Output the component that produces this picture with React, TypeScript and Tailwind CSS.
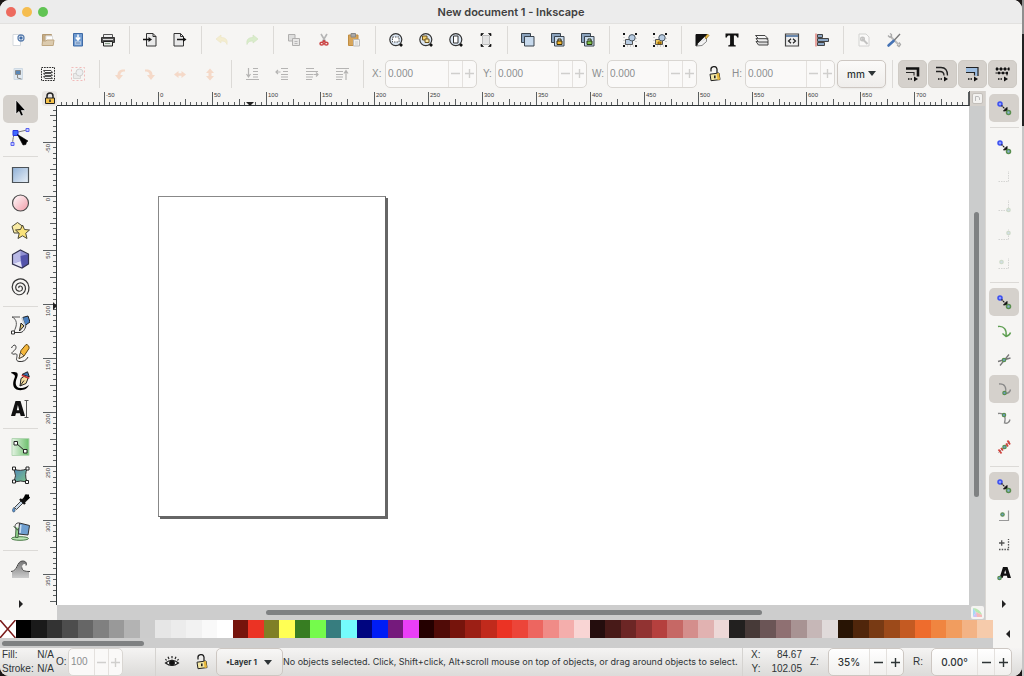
import React, { useEffect, useRef, useState } from "react";

type Kids = { children?: React.ReactNode };

const Ic = ({ s = 16, o = 1, children }: Kids & { s?: number; o?: number }) => (
  <svg width={s} height={s} viewBox={`0 0 ${s} ${s}`} opacity={o} fill="none" stroke="#222" strokeWidth="1" aria-hidden="true">
    {children}
  </svg>
);

const Sep = () => (
  <div className="flex h-7 w-3 shrink-0 justify-center">
    <div className="w-px bg-[#dcdad7]" />
  </div>
);

const Tool = ({ label, on, disabled, children }: Kids & { label: string; on?: boolean; disabled?: boolean }) => (
  <button
    aria-label={label}
    disabled={disabled}
    className={`flex h-7 w-[30px] shrink-0 items-center justify-center rounded-[5px] ${on ? "bg-[#d5d1cc]" : ""}`}
  >
    {children}
  </button>
);

const Minus = () => (
  <svg width="9" height="9" stroke="currentColor" strokeWidth="1.4" aria-hidden="true"><path d="M0 4.5H9" /></svg>
);
const Plus = () => (
  <svg width="9" height="9" stroke="currentColor" strokeWidth="1.4" aria-hidden="true"><path d="M0 4.5H9M4.5 0V9" /></svg>
);

const Caret = () => (
  <svg width="8" height="5" className="pointer-events-none" aria-hidden="true"><path d="M0 0H8L4 5Z" fill="#2e3436" /></svg>
);

const Spin = ({ id, value, width, off, wide }: { id: string; value: string; width: string; off?: boolean; wide?: boolean }) => (
  <div
    className={`flex h-7 shrink-0 overflow-hidden rounded-[5px] border ${width} ${
      off ? "border-[#d9d6d2] bg-[#faf9f8] text-[#8b8e8f]" : "border-[#cdc7c2] bg-linear-to-b from-white to-[#f1f0ee] text-[#2e3436]"
    }`}
  >
    <input
      id={id}
      defaultValue={value}
      disabled={off}
      className={`w-0 min-w-0 flex-1 bg-transparent outline-none ${wide ? "text-center font-[Inter] font-medium" : "pl-0.5"}`}
    />
    <button aria-label={`Decrease ${id}`} className={`flex items-center justify-center border-l border-[#e4e1de] ${wide ? "w-[17px]" : "w-[14px]"} ${off ? "text-[#d0cfcd]" : ""}`}>
      <Minus />
    </button>
    <button aria-label={`Increase ${id}`} className={`flex items-center justify-center border-l border-[#e4e1de] ${wide ? "w-[17px]" : "w-[14px]"} ${off ? "text-[#d0cfcd]" : ""}`}>
      <Plus />
    </button>
  </div>
);

const OpenLock = () => (
  <Ic>
    <path d="M4 5.5V4a3 3 0 0 1 6-.8V7" stroke="#222" strokeWidth="1.3" />
    <path d="M3 8.2 12 7l1 6.600L4 14.700Z" fill="#f3e7a4" />
    <path d="M9.600 7.500 12 7l1 6.600-2.400.4Z" fill="#e8b93c" stroke="none" />
    <path d="M7.800 9.600v2.600" strokeWidth="1.600" />
  </Ic>
);

const Lens = ({ children }: Kids) => (
  <Ic>
    <path d="M11.500 11.500 14 14" strokeWidth="2.600" stroke="#111" />
    <circle cx="7.800" cy="7.600" r="6" fill="#dbe6f2" stroke="#333" strokeWidth="1.200" />
    {children}
  </Ic>
);

const Stack = ({ children }: Kids) => (
  <Ic>
    <path d="M1.500 1.500h9v9h-9z" fill="#8ba3bd" stroke="#39434d" />
    <path d="M4.500 4.500h9.500v9.500h-9.500z" fill="#c7d9ec" stroke="#39434d" />
    {children}
  </Ic>
);

const Corners = ({ lock }: { lock?: boolean }) => (
  <Ic>
    <path d="M3.500 7.500h7v5h-7z" fill={lock ? "#f2c95c" : "#b8cce2"} stroke="#555" />
    <circle cx="10" cy="5.800" r="3.200" fill="#b8cce2" stroke="#4a5661" />
    {lock && <path d="M6 10h3v2H6z" fill="#f7a800" stroke="#5a3c00" strokeWidth=".7" />}
    <path d="M1 1h2v2H1zM13 1h2v2h-2zM1 13h2v2H1zM13 13h2v2h-2z" fill="#111" stroke="none" />
    <path d="M2 5v7M5 14h7M14 6v6" stroke="#aaa" strokeDasharray="1 2" />
  </Ic>
);

const topGroups: { n: string; off?: boolean; i: React.ReactNode }[][] = [
  [
    { n: "New", i: <Ic><path d="M3 2.500h7.500v11H3z" fill="#fff" stroke="#d5d9dd" /><circle cx="11" cy="6" r="3" fill="#fff" stroke="#5c7fae" strokeWidth="1.300" /><path d="M9.300 6h3.400M11 4.300v3.400" stroke="#2f5f9f" strokeWidth="1.300" /></Ic> },
    { n: "Open", i: <Ic><path d="M2.500 2.500h9v9h-9z" fill="#c4ab85" stroke="#b49a73" /><path d="M6 4h6.500v5H6z" fill="#fff" stroke="#ddd" /><path d="M2.500 9H6l1-1h7l-.8 5.500H2Z" fill="#dccbae" stroke="#bfa781" /></Ic> },
    { n: "Save", i: <Ic><path d="M3.500 1.500h9v12.500h-9z" fill="#6f9bd1" stroke="#3f6aa5" /><path d="M5 9.500h6v3H5z" fill="#d6e1ef" stroke="none" /><path d="M8 2.500v5M5.800 5.500 8 8l2.200-2.500" stroke="#fff" strokeWidth="1.500" /><path d="M5.500 11h5" stroke="#3f6aa5" /></Ic> },
    { n: "Print", i: <Ic><path d="M3.500 2.500h9V6h-9z" fill="#eee" stroke="#555" /><path d="M1.500 5.500h13v5h-13z" fill="#555" stroke="#333" /><path d="M3 7.500h10" stroke="#ddd" /><path d="M3.500 9.500h9V14h-9z" fill="#e6e9e6" /><path d="M5 11.500h5" stroke="#8aa08a" /></Ic> },
  ],
  [
    { n: "Import", i: <Ic><path d="M4.500 1.500H11L14 4.500v9.500H4.500z" fill="#e9e9e9" stroke="#333" /><path d="M11 1.500V4.500h3" stroke="#333" /><path d="M1 7.500h7" stroke="#111" strokeWidth="1.300" /><path d="M6.500 5 10 7.500 6.500 10Z" fill="#111" stroke="none" /></Ic> },
    { n: "Export", i: <Ic><path d="M2 1.500h6.500l3 3v9.500H2z" fill="#e9e9e9" stroke="#333" /><path d="M8.500 1.500V4.500h3" stroke="#333" /><path d="M5 7.500h7" stroke="#111" strokeWidth="1.300" /><path d="M11 5 14.500 7.500 11 10Z" fill="#111" stroke="none" /></Ic> },
  ],
  [
    { n: "Undo", off: true, i: <Ic o={0.3}><path d="M2 7 7 3v2.500c4 0 7 1.500 6 7-1-3-3-3.500-6-3.500V11Z" fill="#f0dc82" stroke="#d9c25a" strokeWidth=".6" /></Ic> },
    { n: "Redo", off: true, i: <Ic o={0.35}><path d="M14 7 9 3v2.500c-4 0-7 1.500-6 7 1-3 3-3.500 6-3.500V11Z" fill="#a6dc82" stroke="#86c25a" strokeWidth=".6" /></Ic> },
  ],
  [
    { n: "Copy", off: true, i: <Ic o={0.55}><path d="M2.500 2.500h6.500v6.500h-6.500z" fill="#ccc" stroke="#777" /><path d="M6.500 6.500h7v7h-7z" fill="#ddd" stroke="#777" /><path d="M8.500 9.500h3M8.500 11.500h3" stroke="#888" /></Ic> },
    { n: "Cut", off: true, i: <Ic><path d="M5 2l4.500 7.500M11 2 6.500 9.500" stroke="#b5b5b5" strokeWidth="1.600" /><path d="M8 8.500 6.800 10M8 8.500 9.200 10" stroke="#c44" strokeWidth="1.500" /><ellipse cx="5.700" cy="11.700" rx="1.700" ry="1.400" stroke="#cb4444" strokeWidth="1.500" /><ellipse cx="10.300" cy="11.700" rx="1.700" ry="1.400" stroke="#cb4444" strokeWidth="1.500" /></Ic> },
    { n: "Paste", i: <Ic><path d="M2.500 3h9.500v10.500H2.500z" fill="#d7a55a" stroke="#c08d42" /><path d="M5 1.500h4.500V5H5z" fill="#a9a9a9" stroke="#888" /><path d="M7.500 7.500h6v6.500h-6z" fill="#f0f0ee" stroke="#bbb" /><path d="M9 10h3M9 12h3" stroke="#ccc" /></Ic> },
  ],
  [
    { n: "Zoom selection", i: <Lens><path d="M4.500 5h6.500v5H4.500z" fill="#fff" stroke="#555" strokeDasharray="1.500 1" /></Lens> },
    { n: "Zoom drawing", i: <Lens><path d="M4.500 4h4.500v4H4.500z" fill="#f5cf6b" stroke="#6b521c" /><path d="M7 7h4v3.500H7z" fill="#fbe8a6" stroke="#6b521c" /></Lens> },
    { n: "Zoom page", i: <Lens><path d="M5.500 4h4.500v7H5.500z" fill="#fff" stroke="#333" /></Lens> },
    { n: "Zoom page center", i: <Ic><path d="M4.500 3.500h7v9h-7z" fill="#e3e3e3" stroke="#bbb" /><path d="M3 1.500h2.500L3 4zM13 1.500v2.500l-2.500-2.500zM3 14.500v-2.500l2.500 2.500zM13 14.500h-2.500L13 12z" fill="#111" stroke="#111" strokeWidth=".7" /></Ic> },
  ],
  [
    { n: "Duplicate", i: <Stack /> },
    { n: "Clone", i: <Stack><path d="M7 9h5v3.500H7z" fill="#f5b82e" stroke="#3a2c06" /><path d="M8 9V7h3V9" stroke="#3a2c06" /></Stack> },
    { n: "Unlink clone", i: <Stack><path d="M7 9h5v3.500H7z" fill="#7ec44a" stroke="#26350f" /><path d="M8 8V7h3V9" stroke="#26350f" /></Stack> },
  ],
  [
    { n: "Group", i: <Corners /> },
    { n: "Ungroup", i: <Corners lock /> },
  ],
  [
    { n: "Fill and stroke", i: <Ic><path d="M2 2.500h11L8 9l-6 5z" fill="#111" stroke="#111" /><path d="M2.500 14 12.500 5v4.500L8 13.500Z" fill="#f3f3f3" stroke="#555" strokeWidth=".7" /><path d="M4 12.500 11.500 5" stroke="#fff" strokeWidth="1.400" /><path d="M11 5 13.500 2l1.500 1.500L12 7Z" fill="#eec14a" stroke="#7d5e15" strokeWidth=".6" /></Ic> },
    { n: "Text", i: <Ic><path d="M1.500 1.500h13v4h-1.400c-.3-1.500-.9-2-2.300-2H9.900V12c0 1 .5 1.300 1.800 1.300v1.200H4.300v-1.200c1.300 0 1.800-.3 1.800-1.300V3.500h-.9c-1.400 0-2 .5-2.300 2H1.500Z" fill="#111" stroke="none" /></Ic> },
    { n: "Layers", i: <Ic><path d="M2 9.500 4.500 13H14V10L11 9Z" fill="#ddd" stroke="#444" /><path d="M2 6.500 4.500 10H14V7.500L11 6Z" fill="#eee" stroke="#444" /><path d="M1.500 3.500H11l3 3.200H4.500Z" fill="#f6f6f6" stroke="#444" /></Ic> },
    { n: "XML editor", i: <Ic><path d="M1.500 2h13v12h-13z" fill="#eee" stroke="#444" strokeWidth="1.200" /><path d="M2 4h12" stroke="#6a88ad" strokeWidth="2" /><path d="M7 6.800 4.500 9 7 11.200M9 6.800 11.500 9 9 11.200" stroke="#222" strokeWidth="1.200" /></Ic> },
    { n: "Align", i: <Ic><path d="M2 1.500v13" stroke="#e58e88" strokeWidth="1.600" /><path d="M3.500 2.500h5v3h-5z" fill="#8ca6c4" stroke="#444" /><path d="M3.500 6.500h11v3h-11z" fill="#8ca6c4" stroke="#444" /><path d="M3.500 10.500h7v3h-7z" fill="#8ca6c4" stroke="#444" /></Ic> },
  ],
  [
    { n: "Document properties", off: true, i: <Ic o={0.45}><path d="M3 2h7l3 3v9H3z" fill="#fff" stroke="#aaa" /><path d="M6 6.500 11.500 12" stroke="#888" strokeWidth="2" /><circle cx="6.500" cy="7" r="1.800" stroke="#888" strokeWidth="1.400" /></Ic> },
    { n: "Preferences", i: <Ic><path d="M4 4 12.500 12.500" stroke="#bbb" strokeWidth="2" /><path d="M2 3.500 3.500 5H5.500V2.500L4 1.500M11 13l2 1.500 1.500-2L13 10.500" stroke="#aaa" strokeWidth="1.300" /><path d="M8 8.500 14 2" stroke="#777" strokeWidth="1.300" /><path d="M2.500 13.500 7.500 9" stroke="#4573b5" strokeWidth="2.600" strokeLinecap="round" /></Ic> },
  ],
];

const curve = { fill: "#f4a77a", stroke: "none" };
const secondGroups: { n: string; i: React.ReactNode }[][] = [
  [
    { n: "Select all", i: <Ic o={0.85}><path d="M4 2.500h8.500v11H4z" fill="#dde7f1" stroke="#c9d6e2" /><path d="M5.500 4.500h5v4h-5z" fill="#3f74ad" stroke="#777" /><path d="M7.500 8v4l4 1" stroke="#777" /></Ic> },
    { n: "Select all in layers", i: <Ic><path d="M1.500 1.500h13v13h-13z" stroke="#222" strokeDasharray="1.600 1" /><path d="M3.500 10.500h7.500l1.500 2H5z" fill="#eee" stroke="#555" /><path d="M3.500 7.500h7.500l1.500 2H5z" fill="#eee" stroke="#555" /><path d="M3.500 4.500h7.500l1.500 2H5z" fill="#fff" stroke="#444" /></Ic> },
    { n: "Deselect", i: <Ic o={0.4}><path d="M1.500 1.500h13v13h-13z" stroke="#e66" strokeDasharray="2 2" /><path d="M3.500 7.500h7v5h-7z" fill="#ddd" stroke="#aaa" /><circle cx="9.500" cy="6.500" r="3.500" fill="#e2e8ee" stroke="#999" /></Ic> },
  ],
  [
    { n: "Rotate left", i: <Ic o={0.35}><path {...curve} d="M13 3.500C7 3 5.500 6 5.500 9H3l4 5 4-5H8.500c0-2 1-3.500 4.500-3.500Z" /></Ic> },
    { n: "Rotate right", i: <Ic o={0.35}><path {...curve} d="M3 3.500C9 3 10.500 6 10.500 9H13l-4 5-4-5h2.500c0-2-1-3.500-4.500-3.500Z" /></Ic> },
    { n: "Flip horizontal", i: <Ic o={0.35}><path {...curve} d="M2 8.500 6.500 5v2.300h3V5L14 8.500 9.500 12V9.700h-3V12Z" /></Ic> },
    { n: "Flip vertical", i: <Ic o={0.35}><path {...curve} d="M8 2.500 12 7H9.500v3H12l-4 4.500L4 10h2.500V7H4Z" /></Ic> },
  ],
  [
    { n: "Lower to bottom", i: <Ic o={0.3}><path d="M4.500 2v8M2.500 8l2 3 2-3M2 13.500h13M9 2.500h5M9 5.500h5M9 8.500h5M9 11h5" strokeWidth="1.200" /></Ic> },
    { n: "Lower", i: <Ic o={0.3}><path d="M7 2.500h7M9 5.500h5M7 8.500h7M7 11h7M7 13.500h7M6.500 6H2M4 4 2 6l2 2" strokeWidth="1.200" /></Ic> },
    { n: "Raise", i: <Ic o={0.3}><path d="M2 2.500h8M2 5.500h12M2 8.500h7M2 11h7M2 13.500h6M9.500 8.500H14M12 6.500l2 2-2 2" strokeWidth="1.200" /></Ic> },
    { n: "Raise to top", i: <Ic o={0.3}><path d="M2 2.500h13M2 5.500h7M2 8.500h7M2 11h7M2 13.500h6M12 14V5M10 7.500 12 4.500l2 3" strokeWidth="1.200" /></Ic> },
  ],
];

const dash = <><path d="M4 14h5" stroke="#111" strokeWidth="1.300" strokeDasharray="1.500 1" /><path d="M10 11.500 14 14 10 16.500Z" fill="#111" stroke="none" /></>;
const toggles = [
  { n: "Scale stroke width", i: <Ic s={17}><path d="M2 3.500h12v8" stroke="#111" strokeWidth="2.600" /><path d="M2 7.500h8v3" strokeWidth="1.100" />{dash}</Ic> },
  { n: "Scale rounded corners", i: <Ic s={17}><path d="M2 2.500h5c4 0 6.500 3 6.500 8" strokeWidth="1.300" /><path d="M2 6.500h4c3 0 4 1.500 4 4" strokeWidth="1.300" />{dash}</Ic> },
  { n: "Move gradients", i: <Ic s={17}><path d="M2 3h12v8h-3V7H2z" fill="#9dbde0" stroke="none" /><path d="M2 2.500h12v8.500M2 7.500h8.500v3" strokeWidth="1.200" />{dash}</Ic> },
  { n: "Move patterns", i: <Ic s={17}><path d="M1.500 4h14M1.500 8h12" stroke="#111" strokeWidth="1" /><path d="M2 2.500h2v3H2zM6 2.500h2v3H6zM10 2.500h2v3h-2zM14 2.500h1.500v3H14zM4 6.800h2v2.400H4zM8 6.800h2v2.400H8zM12 6.800h2v2.400h-2z" fill="#111" stroke="none" /><path d="M13 8v2.500" stroke="#111" />{dash}</Ic> },
];

const toolGroups: { n: string; i: React.ReactNode }[][] = [
  [
    { n: "Selector", i: <Ic s={20}><path d="M6 1v14l3-2.600 2 4.600 2.300-1-2-4.500H15.500Z" fill="#000" stroke="#fff" strokeWidth=".6" /></Ic> },
    { n: "Node", i: <Ic s={20}><path d="M2.500 17C3 10 4 6 6 5.500L17 3" stroke="#777" /><path d="M1 15.500h3v3H1zM16 1.500h3v3h-3z" fill="#c3c8ff" stroke="#5a62f0" /><path d="M3 3.500h5v5H3z" fill="#3f6bff" stroke="#2b35e0" /><path d="M7.500 7.500 18 14l-1.500 1-.7 2.500L13 18Z" fill="#000" stroke="#000" strokeWidth=".6" /></Ic> },
  ],
  [
    { n: "Rectangle", i: <Ic s={20}><defs><linearGradient id="gr" x2="1" y2="1"><stop stopColor="#8fb0d6" /><stop offset="1" stopColor="#e9f0f7" /></linearGradient></defs><path d="M2.500 2.500h16v15h-16z" fill="url(#gr)" stroke="#4c5257" strokeWidth="1.200" /></Ic> },
    { n: "Ellipse", i: <Ic s={20}><defs><linearGradient id="ge" x2="1" y2="1"><stop stopColor="#fff" /><stop offset="1" stopColor="#f29aa7" /></linearGradient></defs><circle cx="10.500" cy="10" r="8" fill="url(#ge)" stroke="#4c4c4c" strokeWidth="1.200" /></Ic> },
    { n: "Star", i: <Ic s={20}><path d="M2 5.500 7.500 1.500 13 5.500 11 12H4Z" fill="#f8eaa4" stroke="#4d4a36" /><path d="m12.500 4 2 4.500 5 .5-3.800 3.300 1.300 5.200-4.500-2.700L8 17.500l1.200-5.200L5.500 9l5-.5Z" fill="#f9e27a" stroke="#4d4a36" /></Ic> },
    { n: "3D box", i: <Ic s={20}><path d="M10.500 1 18.500 5v10L12 19 2.500 15V5.500Z" fill="#8f8fd2" stroke="none" /><path d="M10.500 1 2.500 5.500V15l8-3.500Z" fill="#b9b9e6" stroke="none" /><path d="M10.500 7 18.500 5v10L12 19Z" fill="#5353aa" stroke="none" /><path d="M2.500 15 10.500 12l1.500 7Z" fill="#e4e4f8" stroke="none" /><path d="M10.500 1 18.500 5v10L12 19 2.500 15V5.500Z" stroke="#33334f" strokeWidth="1.200" /></Ic> },
    { n: "Spiral", i: <Ic s={20}><path d="M17 17.500C20 13 19.500 7 16 4 11.500 0 5 2 3 6.500 1 11 3 16 7.500 17.500c4 1 7.500-1.500 8-5.500.3-4-3-6.500-6-6C6.500 6.500 5 9.500 6 12c1 2.500 4.500 3 6 1 1-2 0-4-1.800-4-1.200 0-1.700 1-1.200 2" strokeWidth="1.200" stroke="#333" /></Ic> },
  ],
  [
    { n: "Pen", i: <Ic s={20}><path d="M2 2h8M2 2c5 2 6 8 1.500 15" stroke="#555" /><path d="M5 17.500h5c3 0 5-3 6-7" stroke="#333" /><path d="M1.500 16h3v3h-3z" fill="#fff" stroke="#333" /><path d="M12.500 2.500 18 1l2 6-5 3.500Z" fill="#4a80c0" stroke="#222" /><path d="M11 3 12.500 2l3 8.500-1.500 1Z" fill="#c9d2da" stroke="none" /><path d="M9.500 16 11 8l3 3Z" fill="#d8c27a" stroke="#222" /></Ic> },
    { n: "Pencil", i: <Ic s={20}><path d="M1.500 5C3 1.500 6 1 6 4.500c0 3-5 4.500-4 6 1 2 5-1.500 5 2 0 3-2 5 2 6 4 .5 7.500-1 9-4.500" stroke="#333" /><path d="M9 15.500 11 7.500 16 1.500c2 0 3.500 2 3 4L14 13Z" fill="#f4b73c" stroke="#5f4410" /><path d="M9 15.500 10.500 9.500l3.500 3.500Z" fill="#f7e4c0" stroke="#333" strokeWidth=".7" /></Ic> },
    { n: "Calligraphy", i: <Ic s={20}><path d="M1 1.500C8 0 9 3 6.500 8c-1.500 3.500-1 9 3.500 9 3 0 6-.5 9-3-2 5-8 6-12.500 4.500-4-2-4-7-2-11.500 1-2 .5-3.500-3.500-5Z" fill="#000" stroke="none" /><path d="M10 15 11 7.500l3.500-2.500 3.500 2.500-2 5Z" fill="#f5dda0" stroke="#222" /><path d="M12 3.500 17.500.8l1.800 5Z" fill="#3f74b5" stroke="#222" /><path d="m12 3.500 7.500 3-.5 1.500-7.500-3Z" fill="#c33" stroke="none" /><path d="m10 15 4-5.500" /></Ic> },
    { n: "Text", i: <Ic s={20}><path d="M5.500 2h5L15 17h-4.300l-.8-2.800H6L5.200 17H1Zm2.400 4L6.800 11.200h2.400Z" fill="#111" stroke="none" /><path d="M14.500 1.500h4M14.500 18.500h4M16.500 1.500v17" stroke="#555" /></Ic> },
  ],
  [
    { n: "Gradient", i: <Ic s={20}><defs><linearGradient id="gg"><stop stopColor="#e4f3e3" /><stop offset="1" stopColor="#6bbf6b" /></linearGradient></defs><path d="M2 1.500h17v17H2z" fill="url(#gg)" stroke="#b4d6b4" /><path d="m6 6 9 8" stroke="#222" /><path d="M4 4.500h3.500V8H4zM13.500 12.500H17V16h-3.500z" fill="#fff" stroke="#222" /></Ic> },
    { n: "Mesh", i: <Ic s={20}><defs><linearGradient id="gm" x2="1" y2="1"><stop stopColor="#4f86b8" /><stop offset="1" stopColor="#7cc487" /></linearGradient></defs><path d="M4 4Q10 7 17.500 3.500 14 9 17 17q-6-2-13 0 3-6 0-13Z" fill="url(#gm)" stroke="#333" /><path d="M2.500 2h3v3h-3zM16 2h3v3h-3zM2.500 15h3v3h-3zM15.500 15.500h3v3h-3z" fill="#fff" stroke="#222" /></Ic> },
    { n: "Dropper", i: <Ic s={20}><path d="M4.500 14.500 12 7l2 2-7.500 7.500Z" fill="#c9d9e9" stroke="#444" /><path d="M10 6 15 11M12 8l4.500-5 2 1.500-5 5" stroke="#111" strokeWidth="2.400" /><path d="M15 1.500h4v4l-3 1.500-2-2Z" fill="#000" stroke="none" /><path d="M3.800 14.500c2 2 1.500 4.500 0 4.500S1.800 17 3.800 14.500Z" fill="#5c93cf" stroke="#345" strokeWidth=".6" /></Ic> },
    { n: "Paint bucket", i: <Ic s={20}><ellipse cx="10" cy="17.500" rx="8.500" ry="1.800" fill="#b9e6b4" stroke="#4c7a48" /><path d="M3.500 5.500 6 7 5.500 16.500H8L9 7" fill="#8fd48a" stroke="#4a6a48" /><path d="M9.500 2 19.500 4.500 18 14 8.500 13Z" fill="#6f9fd0" stroke="#333" /><path d="M10.800 4 10 12" stroke="#c7dcf0" strokeWidth="1.600" /><path d="M8 9C3 7 5 1 9.500 2" stroke="#444" /></Ic> },
  ],
  [
    { n: "Tweak", i: <Ic s={20}><defs><linearGradient id="gt" x2="0" y2="1"><stop stopColor="#777" /><stop offset="1" stopColor="#ccc" /></linearGradient></defs><path d="M2 19v-6C8 13 7 2 12.500 2c4 0 4.500 3 3.500 4.500C15 4 12 5 12 8.500c0 3 2 4.500 7 4.500v6Z" fill="url(#gt)" stroke="none" /><path d="M1 12.500C8 12.500 6.500 2 12.500 2c4 0 4.500 3 3.500 4.500M12 8.500c0 3 2 4 8 4" stroke="#444" /></Ic> },
  ],
];

const Snap = () => (
  <Ic s={18}><circle cx="5" cy="5" r="2" fill="#8e9bff" stroke="#3b50f0" strokeWidth="1.500" /><path d="M6.500 6.500 10 10" strokeWidth="1.300" strokeDasharray="1.500 .7" /><path d="M8.500 12 12 11.500V8.500Z" fill="#111" stroke="#111" /><circle cx="13.500" cy="13.500" r="2" fill="#86b0d0" stroke="#5a8f4f" strokeWidth="1.500" /></Ic>
);
const Dot = ({ x, y }: { x: number; y: number }) => <circle cx={x} cy={y} r="1.700" fill="#6b9fc8" stroke="#5a8f4f" strokeWidth="1.200" />;
const Faint = ({ children }: Kids) => <Ic s={18} o={0.25}><path d="M3.500 14.500H13.500V4" stroke="#777" strokeDasharray="1.500 1" />{children}</Ic>;

const snapGroups: { n: string; on?: boolean; off?: boolean; i: React.ReactNode }[][] = [
  [{ n: "Enable snapping", on: true, i: <Snap /> }],
  [
    { n: "Snap bounding boxes", i: <Snap /> },
    { n: "Snap edges", off: true, i: <Faint /> },
    { n: "Snap corners", off: true, i: <Faint><Dot x={13.5} y={14} /></Faint> },
    { n: "Snap edge midpoints", off: true, i: <Faint><Dot x={13.5} y={8} /></Faint> },
    { n: "Snap box centers", off: true, i: <Faint><Dot x={6.5} y={8} /></Faint> },
  ],
  [
    { n: "Snap nodes", on: true, i: <Snap /> },
    { n: "Snap to paths", i: <Ic s={18}><path d="M3 4.500C9 3.500 12 8 11 14M7.500 11.500 11 14.500C13 14 15 12.500 15.500 10.500" stroke="#5d9e50" strokeWidth="1.400" /></Ic> },
    { n: "Snap to intersections", i: <Ic s={18}><path d="M3 10.500 15.500 7M5 14.500 14 3.500" stroke="#777" strokeWidth="1.300" /><Dot x={9} y={9} /></Ic> },
    { n: "Snap cusp nodes", on: true, i: <Ic s={18}><path d="M4 4C10 3.500 12 8 10 13.500c3 0 5-1.500 5.500-4" stroke="#888" strokeWidth="1.300" /><Dot x={9.5} y={13} /></Ic> },
    { n: "Snap smooth nodes", i: <Ic s={18}><path d="M3 4.500c7-1 8 4 6.500 9.500 3 1 5-1 5.500-3.500" stroke="#888" strokeWidth="1.300" /><Dot x={9} y={6} /></Ic> },
    { n: "Snap midpoints", i: <Ic s={18}><path d="M3.500 14.500 15 3.500" stroke="#888" /><path d="M3.500 11.500 6.500 15.500M6 10 8 12.500M11 5.500l2 3M12.500 2.500l2.500 4" stroke="#d0453f" strokeWidth="1.800" /><Dot x={9.500} y={9} /></Ic> },
  ],
  [
    { n: "Snap others", on: true, i: <Snap /> },
    { n: "Snap object centers", i: <Ic s={18}><path d="M4 14.500h9.500V4.500" stroke="#999" strokeWidth="1.200" /><Dot x={7.500} y={8.500} /></Ic> },
    { n: "Snap rotation centers", i: <Ic s={18}><path d="M4 14.500h9.500V4" stroke="#555" strokeWidth="1.300" strokeDasharray="1.500 1.200" /><path d="M4 8h5.500M6.700 5.200v5.500" stroke="#555" strokeWidth="1.300" /></Ic> },
    { n: "Snap text baselines", i: <Ic s={18}><path d="M8 3h4.500L16 14h-3.500l-.6-2.200H8.500L7.500 14H4.500Zm2.200 3L9.200 9.500h2Z" fill="#111" stroke="none" /><Dot x={4.500} y={14} /></Ic> },
  ],
];

const swatches =
  "000000 1a1a1a 333333 4d4d4d 666666 808080 999999 b3b3b3 cccccc e6e6e6 ececec f2f2f2 f9f9f9 ffffff 76140c eb3324 7f7f26 ffff54 377d22 75fb4c 377d7f 74fbfc 00057f 001df5 751a7c ea3ff7 240000 500b07 76140c 9c1f15 c12a1c eb3324 ec4539 ed6660 f08b87 f4aeac f9d5d4 240d0d 481a18 6c2625 913332 b5403e c66865 d48e8c e1b2b1 edd8d7 22201f 473a38 6b5556 8f7072 a89393 c6b7b7 e0dada 281404 50260b 783a14 9c4a1a c45a22 ee6c2d f08540 f19d5f f3b385 f6cbab".split(" ");

const STEP = 5.397;
const tickSize = (n: number) => (n % 10 === 0 ? 14 : n % 5 === 0 ? 7 : 4);

/** Tick numbers that fall inside a ruler of the given length. */
const ticksFor = (origin: number, length: number) => {
  const first = Math.ceil(-origin / STEP);
  const last = Math.floor((length - origin) / STEP);
  return Array.from({ length: Math.max(0, last - first + 1) }, (_, k) => first + k).map((n) => ({
    n,
    p: Math.round(origin + n * STEP),
  }));
};

const useSize = () => {
  const ref = useRef<SVGSVGElement>(null);
  const [size, setSize] = useState({ w: 912, h: 499 });
  useEffect(() => {
    if (!ref.current) return;
    const ob = new ResizeObserver(([e]) => setSize({ w: e.contentRect.width, h: e.contentRect.height }));
    ob.observe(ref.current);
    return () => ob.disconnect();
  }, []);
  return { ref, size };
};

const HRuler = () => {
  const { ref, size } = useSize();
  const ticks = ticksFor(101, size.w);
  return (
    <svg ref={ref} className="h-[15px] min-w-0 flex-1" aria-label="Horizontal ruler">
      <path d={ticks.map(({ n, p }) => `M${p + 0.5} 15v-${tickSize(n)}`).join("")} stroke="#5a5e60" />
      <path d={`M0 14.500H${size.w}`} stroke="#2e3436" />
      {ticks.filter(({ n, p }) => n % 10 === 0 && p < size.w - 14).map(({ n, p }) => (
        <text key={n} x={p + 2} y="6" fontSize="6" fill="#3c4042">{n * 5}</text>
      ))}
      <path d="M189 11h8l-4 4Z" fill="#222" />
    </svg>
  );
};

const VRuler = () => {
  const { ref, size } = useSize();
  const ticks = ticksFor(90, size.h);
  return (
    <svg ref={ref} className="w-[15px] shrink-0" height="100%" aria-label="Vertical ruler">
      <path d={ticks.map(({ n, p }) => `M15 ${p + 0.5}h-${tickSize(n)}`).join("")} stroke="#5a5e60" />
      <path d={`M14.500 0V${size.h}`} stroke="#2e3436" />
      {ticks.filter(({ n, p }) => n % 10 === 0 && p < size.h - 14).map(({ n, p }) => (
        <text key={n} fontSize="6" fill="#3c4042" textAnchor="end" transform={`translate(8 ${p + 2}) rotate(-90)`}>{n * 5}</text>
      ))}
      <path d="M11 196v8l4-4Z" fill="#222" />
    </svg>
  );
};

export default function App() {
  return (
    <div className="flex h-screen min-h-[640px] bg-[#1c1717] font-['Liberation_Sans',Arial,sans-serif] text-[10px] leading-[14px] text-[#2e3436]">
      <div className="flex min-w-0 flex-1 flex-col overflow-hidden rounded-[9px] bg-[#f6f5f3]">
        <header className="grid h-6 shrink-0 grid-cols-[1fr_auto_1fr] items-center border-b border-[#e2e1df] bg-[#ececec] px-[6px]">
          <div className="flex gap-[6px]">
            <button aria-label="Close" className="size-[10px] rounded-full bg-[#ed6a5e]" />
            <button aria-label="Minimize" className="size-[10px] rounded-full bg-[#f5bd4f]" />
            <button aria-label="Zoom" className="size-[10px] rounded-full bg-[#61c454]" />
          </div>
          <h1 className="font-[Inter] text-[11px] font-semibold text-[#404040]">New document 1 - Inkscape</h1>
        </header>

        <div className="flex h-8 shrink-0 items-center pl-[3px]">
          {topGroups.map((g, gi) => (
            <React.Fragment key={gi}>
              {gi > 0 && <Sep />}
              {g.map((t) => <Tool key={t.n} label={t.n} disabled={t.off}>{t.i}</Tool>)}
            </React.Fragment>
          ))}
        </div>

        <div className="flex h-[35px] shrink-0 items-center pl-[3px]">
          {secondGroups.map((g, gi) => (
            <React.Fragment key={gi}>
              {g.map((t) => <Tool key={t.n} label={t.n}>{t.i}</Tool>)}
              <Sep />
            </React.Fragment>
          ))}
          <div className="flex shrink-0 items-center text-[#8b8e8f]">
            <label htmlFor="x" className="w-4 pl-[3px]">X:</label>
            <Spin id="x" value="0.000" width="w-[92px]" off />
            <label htmlFor="y" className="w-[18px] pl-[6px]">Y:</label>
            <Spin id="y" value="0.000" width="w-[92px]" off />
            <label htmlFor="w" className="w-5 pl-[5px]">W:</label>
            <Spin id="w" value="0.000" width="w-[90px]" off />
            <button aria-label="Lock ratio" className="flex w-[35px] justify-center"><OpenLock /></button>
            <label htmlFor="h" className="w-[13px]">H:</label>
            <Spin id="h" value="0.000" width="w-[90px]" off />
          </div>
          <div className="ml-[2px] grid h-7 w-[49px] shrink-0 items-center rounded-[5px] border border-[#cdc7c2] bg-linear-to-b from-[#fbfaf9] to-[#efedeb] shadow-xs">
            <select aria-label="Unit" className="col-start-1 row-start-1 h-full appearance-none bg-transparent pl-[9px] font-[Inter] font-medium">
              <option>mm</option>
              <option>px</option>
            </select>
            <span className="pointer-events-none col-start-1 row-start-1 mr-[9px] justify-self-end"><Caret /></span>
          </div>
          <Sep />
          <div className="flex gap-px">
            {toggles.map((t) => (
              <button key={t.n} aria-label={t.n} className="flex h-7 w-[29px] items-center justify-center rounded-[5px] border border-[#cfcbc5] bg-[#d5d1cc]">{t.i}</button>
            ))}
          </div>
        </div>

        <main className="flex min-h-0 flex-1">
          <nav aria-label="Tools" className="flex w-[42px] shrink-0 flex-col items-start pt-[4px] pl-[3px]">
            {toolGroups.map((g, gi) => (
              <React.Fragment key={gi}>
                {gi > 0 && <div className="flex h-[10px] w-[35px] items-center"><div className="h-px w-full bg-[#dcdad7]" /></div>}
                {g.map((t, i) => (
                  <button key={t.n} aria-label={t.n} className={`flex h-7 w-[35px] items-center justify-center rounded-[5px] pr-0.5 ${gi === 0 && i === 0 ? "bg-[#d5d1cc]" : ""}`}>{t.i}</button>
                ))}
              </React.Fragment>
            ))}
            <button aria-label="More tools" className="mt-auto flex h-8 w-[35px] items-center justify-center">
              <svg width="4" height="8"><path d="M0 0V8L4 4Z" fill="#222" /></svg>
            </button>
          </nav>

          <section className="flex min-w-0 flex-1 flex-col">
            <div className="flex h-[15px] shrink-0">
              <button aria-label="Lock guides" className="flex h-[15px] w-[15px] shrink-0 items-center justify-center rounded-[3px] bg-[#e9e6e3]">
                <svg width="12" height="13" fill="none" stroke="#222"><path d="M3 6V4a3 3 0 0 1 6 0v2" strokeWidth="1.500" /><path d="M1.500 6h9v5.500h-9z" fill="#f6c24a" /><path d="M6 7.500V10" strokeWidth="1.500" /></svg>
              </button>
              <HRuler />
              <div className="flex w-4 shrink-0 items-end justify-center border-l border-[#555] bg-[#d5d1cc]">
                <button aria-label="Toggle display mode" className="mb-[2px] flex size-[11px] items-center justify-center rounded-[2px] border border-[#c3bfba] bg-[#f3f2f0]">
                  <svg width="7" height="7" fill="none" stroke="#bbb"><path d="M1.500 6V1.500h3L5.500 3v2" /></svg>
                </button>
              </div>
            </div>
            <div className="flex min-h-0 flex-1">
              <VRuler />
              <div className="relative min-w-0 flex-1 overflow-hidden bg-white">
                <div className="absolute top-[90px] left-[101px] h-[321px] w-[228px] border border-t-[#888] border-r-[#666] border-b-[#666] border-l-[#888] bg-white shadow-[2px_2px_0_#666]" />
              </div>
              <div className="flex w-4 shrink-0 flex-col items-center bg-[#cbcccc] pr-px">
                <div className="grow-[106]" />
                <div className="w-[5px] grow-[285] rounded-full bg-[#7f8182]" />
                <div className="grow-[108]" />
              </div>
            </div>
            <div className="flex h-[15px] shrink-0">
              <div className="w-[15px]" />
              <div className="flex flex-1 items-center bg-[#cdcdcd]">
                <div className="grow-[209]" />
                <div className="h-[5px] grow-[496] rounded-full bg-[#7f8182]" />
                <div className="grow-[207]" />
              </div>
              <button aria-label="Color management" className="flex w-4 items-center justify-center bg-[#cdcdcd]">
                <svg width="13" height="13"><rect width="13" height="13" rx="2" fill="#f5f4f2" /><path d="M2 2v9l3-5Z" fill="#a6d8f5" /><path d="M2 2c4 0 8 3 9 7L5 6Z" fill="#b9e8b0" /><path d="M5 6 2 11h5Z" fill="#cfc2f5" /><path d="M5 6l6 3v2H6Z" fill="#f6b9b9" /></svg>
              </button>
            </div>
          </section>

          <nav aria-label="Snapping" className="flex w-[37px] shrink-0 flex-col items-center border-l border-[#dad7d3] pt-[3px]">
            {snapGroups.map((g, gi) => (
              <React.Fragment key={gi}>
                {gi > 0 && <div className="flex h-[11px] w-[29px] items-center"><div className="h-px w-full bg-[#dcdad7]" /></div>}
                <div className="flex flex-col gap-px">
                  {g.map((t) => <Tool key={t.n} label={t.n} on={t.on} disabled={t.off}>{t.i}</Tool>)}
                </div>
              </React.Fragment>
            ))}
            <button aria-label="More snapping" className="mt-auto flex h-8 w-[29px] items-center justify-center">
              <svg width="4" height="8"><path d="M0 0V8L4 4Z" fill="#222" /></svg>
            </button>
          </nav>
        </main>

        <div className="flex h-7 shrink-0">
          <div className="flex min-w-0 flex-1 flex-col bg-[#cdcdcd]">
            <div className="flex h-[18px]">
              <button aria-label="No color" className="min-w-0 flex-1 bg-white">
                <svg width="100%" height="18" viewBox="0 0 15 18" preserveAspectRatio="none"><path d="M0 0 15 18M15 0 0 18" stroke="#7c1c1c" strokeWidth="1.500" /></svg>
              </button>
              {swatches.map((c, i) => (
                <button key={i} aria-label={`#${c}`} className="min-w-0 flex-1" style={{ backgroundColor: `#${c}` }} />
              ))}
            </div>
            <div className="flex flex-1 items-center pl-[2px]">
              <div className="h-[5px] w-1/7 rounded-full bg-[#7f8182]" />
            </div>
          </div>
          <button aria-label="Palette menu" className="flex w-[29px] shrink-0 items-center justify-center">
            <svg width="4" height="8"><path d="M4 0V8L0 4Z" fill="#222" /></svg>
          </button>
        </div>

        <footer className="flex h-7 shrink-0 items-center bg-linear-to-b from-[#f5f4f3] to-[#dcdbd9]">
          <dl className="grid w-14 shrink-0 grid-cols-[1fr_auto] pr-0.5 pl-0.5">
            <dt>Fill:</dt><dd>N/A</dd>
            <dt>Stroke:</dt><dd>N/A</dd>
          </dl>
          <label htmlFor="opacity" className="w-3">O:</label>
          <Spin id="opacity" value="100" width="w-[55px]" off />
          <div className="ml-8 h-7 w-px bg-[#d5d3d0]" />
          <button aria-label="Layer visibility" className="flex w-[31px] justify-center">
            <Ic><path d="M1.500 9Q8 3.500 14.500 9 8 14 1.500 9Z" fill="#fff" strokeWidth="1.200" /><circle cx="8" cy="8.800" r="2.600" fill="#111" /><path d="M2.500 6.500 1.500 5M5 5 4 2.800M8 4.200V2M11 5l1-2.200M13.500 6.500l1-1.500" strokeWidth="1.200" /></Ic>
          </button>
          <button aria-label="Layer lock" className="flex w-[29px] justify-center"><OpenLock /></button>
          <div className="grid h-7 w-[67px] shrink-0 items-center rounded-[5px] border border-[#cdc7c2] bg-linear-to-b from-[#f8f7f6] to-[#e4e2df]">
            <select aria-label="Layer" className="col-start-1 row-start-1 h-full appearance-none bg-transparent pl-[9px] font-[Inter] text-[8px] font-bold">
              <option>•Layer 1</option>
            </select>
            <span className="pointer-events-none col-start-1 row-start-1 mr-[10px] justify-self-end"><Caret /></span>
          </div>
          <p className="min-w-0 flex-1 font-[Inter] text-[9px] whitespace-nowrap">No objects selected. Click, Shift+click, Alt+scroll mouse on top of objects, or drag around objects to select.</p>
          <dl className="grid h-7 w-[60px] shrink-0 grid-cols-[auto_1fr] border-l border-[#d5d3d0] pl-2 text-right">
            <dt>X:</dt><dd>84.67</dd>
            <dt>Y:</dt><dd>102.05</dd>
          </dl>
          <label htmlFor="zoom" className="w-[26px] shrink-0 pl-2">Z:</label>
          <Spin id="zoom" value="35%" width="w-[76px]" wide />
          <label htmlFor="rotation" className="w-[27px] shrink-0 pl-[9px]">R:</label>
          <Spin id="rotation" value="0.00°" width="w-[81px]" wide />
          <div className="w-[10px] shrink-0" />
        </footer>
      </div>
      <div className="flex w-[2px] shrink-0 flex-col">
        <div className="h-[34px] bg-[#8f8f8f]" />
        <div className="h-[92px] bg-[#222]" />
        <div className="flex-1 bg-[#c6c6c6]" />
      </div>
    </div>
  );
}
